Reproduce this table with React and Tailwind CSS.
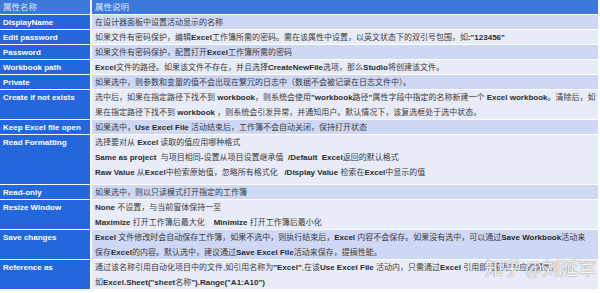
import React from 'react'

const rows = [
  { name: 'DisplayName', lines: ['在设计器面板中设置活动显示的名称'] },
  { name: 'Edit password', lines: ['如果文件有密码保护，编辑Excel工作簿所需的密码。需在该属性中设置，以英文状态下的双引号包围，如:"123456"'] },
  { name: 'Password', lines: ['如果文件有密码保护，配置打开Excel工作簿所需的密码'] },
  { name: 'Workbook path', lines: ['Excel文件的路径。如果该文件不存在，并且选择CreateNewFile选项，那么Studio将创建该文件。'] },
  { name: 'Private', lines: ['如果选中，则参数和变量的值不会出现在繁冗的日志中（数据不会被记录在日志文件中）。'] },
  {
    name: 'Create if not exists',
    lines: [
      '选中后，如果在指定路径下找不到 workbook，则系统会使用"workbook路径"属性字段中指定的名称新建一个 Excel workbook。清除后，如',
      '果在指定路径下找不到 workbook ，则系统会引发异常，并通知用户。默认情况下，该复选框处于选中状态。',
    ],
  },
  { name: 'Keep Excel file open', lines: ['如果选中，Use Excel File 活动结束后，工作簿不会自动关闭，保持打开状态'] },
  {
    name: 'Read Formatting',
    extra: true,
    lines: [
      '选择要对从 Excel 读取的值应用哪种格式',
      'Same as project  与项目相同-设置从项目设置继承值  /Default  Excel返回的默认格式',
      'Raw Value 从Excel中检索原始值，忽略所有格式化   /Display Value 检索在Excel中显示的值',
    ],
  },
  { name: 'Read-only', lines: ['如果选中，则以只读模式打开指定的工作簿'] },
  { name: 'Resize Window', lines: ['None 不设置，与当前窗体保持一至', 'Maximize 打开工作簿后最大化    Minimize 打开工作簿后最小化'] },
  {
    name: 'Save changes',
    lines: [
      'Excel 文件修改时会自动保存工作簿，如果不选中，则执行结束后，Excel 内容不会保存。如果没有选中，可以通过Save Workbook活动来',
      '保存Excel的内容。默认选中，建议通过Save Excel File活动来保存，提搞性能。',
    ],
  },
  {
    name: 'Reference as',
    lines: [
      '通过该名称引用自动化项目中的文件,如引用名称为"Excel",在该Use Excel File 活动内，只需通过Excel 引用即可获取对应的属性。',
      '如Excel.Sheet("sheet名称").Range("A1:A10")',
    ],
  },
]

// latin runs look heavier than the CJK text in the screenshot
const fmt = (s) =>
  s.split(/([A-Za-z0-9"'.:()\/\-_]+(?: [A-Za-z0-9"'.:()\/\-_]+)*)/).map((part, i) =>
    i % 2 === 1 ? (
      <span key={i} className="font-semibold text-[#2b2b2b]">{part}</span>
    ) : (
      <span key={i}>{part}</span>
    )
  )

const font = 'font-["Liberation_Sans","Noto_Sans_CJK_SC",sans-serif]'

const App = () => {
  return (
    <div className={`relative w-[600px] h-[293px] bg-white overflow-hidden ${font}`}>
      <div className="w-[598px] flex flex-col">
        {/* header */}
        <div className="flex gap-x-[2px] h-[15px]">
          <div className="w-[90px] shrink-0 bg-[#3b79da] shadow-[inset_0_-1px_0_#fff] pl-[3px] text-[8.5px] leading-[14px] text-[#dbe5f7]">
            属性名称
          </div>
          <div className="flex-1 bg-[#3b79da] shadow-[inset_0_-1px_0_#fff] pl-[3px] text-[8.5px] leading-[14px] text-[#dbe5f7]">
            属性说明
          </div>
        </div>

        {rows.map((row, idx) => (
          <div key={row.name} className="flex gap-x-[2px]">
            <div className="w-[90px] shrink-0 bg-[#2467dd] shadow-[inset_0_-1px_0_#fff] pl-[3px] text-[8px] leading-[15px] font-bold text-white whitespace-nowrap">
              {row.name}
            </div>
            <div
              className={`flex-1 shadow-[inset_0_-1px_0_#fff] pl-[3px] text-[8px] leading-[15px] text-[#3a3a3a] whitespace-pre ${
                idx % 2 === 0 ? 'bg-[#ced8f4]' : 'bg-[#e8ecf8]'
              } ${row.extra ? 'pb-[5px]' : ''}`}
            >
              {row.lines.map((line, j) => (
                <div key={j}>{fmt(line)}</div>
              ))}
            </div>
          </div>
        ))}
      </div>

      {/* watermark */}
      <div className="absolute right-[4px] top-[256px] text-[18px] leading-[22px] text-white/90 [text-shadow:0_0_1px_#8a8a8a,0_0_1px_#8a8a8a] font-['Noto_Sans_CJK_SC',sans-serif]">
        知乎 @刘延军
      </div>
    </div>
  )
}

export default App
